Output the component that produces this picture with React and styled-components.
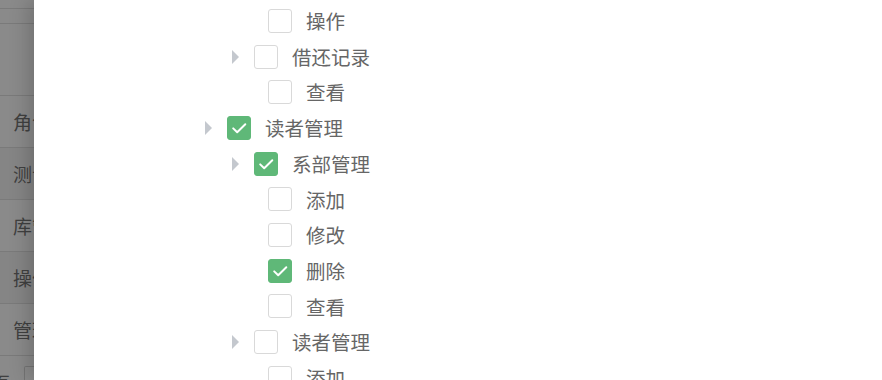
import React from "react"
import styled, { createGlobalStyle } from "styled-components"

const GlobalStyle = createGlobalStyle`
  html, body {
    margin: 0;
    padding: 0;
    overflow: hidden;
  }
  body {
    font-family: "Noto Sans CJK SC", "Noto Sans", sans-serif;
  }
`

const Screen = styled.div`
  position: relative;
  width: 882px;
  height: 380px;
  overflow: hidden;
  background: #fff;
`

/* page underneath the drawer */
const Page = styled.div`
  display: flex;
  flex-direction: column;
  height: 100%;
`
const Strip = styled.div`
  height: ${p => p.$h}px;
  border-bottom: 1px solid #e2e2e2;
  flex-shrink: 0;
`
const TableRow = styled.div`
  height: 51px;
  flex-shrink: 0;
  display: flex;
  align-items: center;
  padding-left: 13px;
  border-bottom: 1px solid #e2e2e2;
  font-size: 19px;
  color: #777;
  white-space: nowrap;
  background: ${p => (p.$odd ? "#f6f6f6" : "#fff")};
`
const Pager = styled.div`
  display: flex;
  align-items: flex-start;
  gap: 14px;
  padding-top: 10px;
  font-size: 19px;
  color: #777;
  span {
    margin-left: -9px;
    margin-top: 7px;
    line-height: 19px;
  }
`
const PagerBox = styled.div`
  width: 40px;
  height: 20px;
  border: 1px solid #d6d6d6;
  border-bottom: none;
  border-radius: 2px 2px 0 0;
`

const Mask = styled.div`
  position: absolute;
  inset: 0;
  background: rgba(0, 0, 0, 0.46);
`

/* drawer */
const Drawer = styled.div`
  position: absolute;
  top: 0;
  bottom: 0;
  left: 34px;
  right: 0;
  background: #fff;
  box-shadow: -6px 0 18px rgba(0, 0, 0, 0.18);
  overflow: hidden;
`
const Tree = styled.div`
  padding-top: 3px;
`
const Node = styled.div`
  display: flex;
  align-items: center;
  height: 35.7px;
  padding-left: ${p => p.$indent}px;
  font-size: 19.5px;
  color: #666;
  white-space: nowrap;
`
const Caret = styled.span`
  width: 0;
  height: 0;
  border-left: 7px solid #c4c8ce;
  border-top: 7px solid transparent;
  border-bottom: 7px solid transparent;
  margin-right: 15px;
`
const Box = styled.span`
  box-sizing: border-box;
  width: 24px;
  height: 24px;
  border-radius: 3px;
  border: 1px solid ${p => (p.$checked ? "#5fb878" : "#d9d9d9")};
  background: ${p => (p.$checked ? "#5fb878" : "#fff")};
  display: flex;
  align-items: center;
  justify-content: center;
  margin-right: 14px;
  flex-shrink: 0;
  svg {
    margin: -1px;
    display: block;
  }
`
const Label = styled.span`
  line-height: 1;
`

const Check = () => (
  <svg width="24" height="24" viewBox="0 0 24 24" fill="none">
    <polyline
      points="6.2,12.4 10.2,16.3 18.3,8.3"
      stroke="#fff"
      strokeWidth="2"
      strokeLinecap="round"
      strokeLinejoin="round"
    />
  </svg>
)

const nodes = [
  { label: "操作", depth: 3, leaf: true },
  { label: "借还记录", depth: 2 },
  { label: "查看", depth: 3, leaf: true },
  { label: "读者管理", depth: 1, checked: true },
  { label: "系部管理", depth: 2, checked: true },
  { label: "添加", depth: 3, leaf: true },
  { label: "修改", depth: 3, leaf: true },
  { label: "删除", depth: 3, leaf: true, checked: true },
  { label: "查看", depth: 3, leaf: true },
  { label: "读者管理", depth: 2 },
  { label: "添加", depth: 3, leaf: true },
]

const roles = ["角色管理员", "测试人员", "库管理员", "操作员", "管理员"]

export default function App() {
  return (
    <Screen>
      <GlobalStyle />
      <Page>
        <Strip $h={8} />
        <Strip $h={14} />
        <Strip $h={71} />
        {roles.map((r, i) => (
          <TableRow key={r} $odd={i % 2 === 1}>
            {r}
          </TableRow>
        ))}
        <Pager>
          <span>页</span>
          <PagerBox />
        </Pager>
      </Page>
      <Mask />
      <Drawer>
        <Tree>
          {nodes.map((n, i) => (
            <Node key={i} $indent={144 + n.depth * 27 + (n.leaf ? 9 : 0)}>
              {!n.leaf && <Caret />}
              <Box $checked={n.checked}>{n.checked && <Check />}</Box>
              <Label>{n.label}</Label>
            </Node>
          ))}
        </Tree>
      </Drawer>
    </Screen>
  )
}
